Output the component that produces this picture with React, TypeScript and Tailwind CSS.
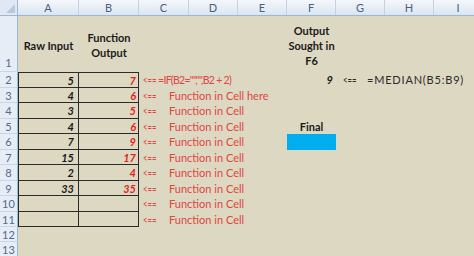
import React from "react";

const colW = ["w-[61px]", "w-[60px]", "w-[50px]", "w-[49px]", "w-[49px]", "w-[49px]", "w-[49px]", "w-[49px]", "w-[49px]"];
const letters = ["A", "B", "C", "D", "E", "F", "G", "H", "I"];

type Row = {
  n: number;
  h: string;
  a?: string;
  b?: string;
  table?: boolean;
  c?: React.ReactNode;
  f?: React.ReactNode;
  g?: React.ReactNode;
};

const Arrow = ({ w }: { w: string }) => (
  <span className={`inline-block ${w}`}>
    <span className="inline-block origin-left scale-x-[0.7] text-[11px]">&lt;==</span>
  </span>
);

const fnCell = (label: string) => (
  <span className="text-[#e0463f]">
    <Arrow w="w-[26px]" />
    {label}
  </span>
);

const rows: Row[] = [
  {
    n: 2,
    h: "h-[16px]",
    a: "5",
    b: "7",
    table: true,
    c: (
      <span className="text-[#e0463f]">
        <Arrow w="w-[15px]" />
        <span className="text-[10.5px] tracking-[-0.7px]">{'=IF(B2="","",B2 + 2)'}</span>
      </span>
    ),
    f: <span className="block w-full pr-[3px] text-right font-bold italic text-[#1a1a1a]">9</span>,
    g: (
      <span className="text-[#2a2a2a]">
        <Arrow w="w-[24px]" />
        <span className="tracking-[0.8px]">=MEDIAN(B5:B9)</span>
      </span>
    ),
  },
  { n: 3, h: "h-[15px]", a: "4", b: "6", table: true, c: fnCell("Function in Cell here") },
  { n: 4, h: "h-[16px]", a: "3", b: "5", table: true, c: fnCell("Function in Cell") },
  {
    n: 5,
    h: "h-[15px]",
    a: "4",
    b: "6",
    table: true,
    c: fnCell("Function in Cell"),
    f: <span className="block w-full text-center font-bold text-[#1a1a1a]">Final</span>,
  },
  {
    n: 6,
    h: "h-[16px]",
    a: "7",
    b: "9",
    table: true,
    c: fnCell("Function in Cell"),
    f: <span className="block h-full w-full bg-[#00aeef]" />,
  },
  { n: 7, h: "h-[15px]", a: "15", b: "17", table: true, c: fnCell("Function in Cell") },
  { n: 8, h: "h-[16px]", a: "2", b: "4", table: true, c: fnCell("Function in Cell") },
  { n: 9, h: "h-[15px]", a: "33", b: "35", table: true, c: fnCell("Function in Cell") },
  { n: 10, h: "h-[16px]", table: true, c: fnCell("Function in Cell") },
  { n: 11, h: "h-[15px]", table: true, c: fnCell("Function in Cell") },
  { n: 12, h: "h-[15px]" },
  { n: 13, h: "h-[16px]" },
];

function RowNum({ n, h, bottom }: { n: number; h: string; bottom?: boolean }) {
  return (
    <div
      className={`${h} flex w-[18px] shrink-0 justify-center border-r border-b border-r-[#9eb6ce] border-b-[#c9d6e6] bg-[#e6edf7] text-[11px] leading-none text-[#55698a] ${
        bottom ? "items-end pb-[3px]" : "items-center"
      }`}
    >
      {n}
    </div>
  );
}

export default function App() {
  return (
    <div
      className="h-[256px] w-[474px] overflow-hidden bg-[#ddd8c2] text-[11px] leading-[15px]"
      style={{ fontFamily: "Lato, 'Open Sans', sans-serif" }}
    >
      {/* column letters */}
      <div className="flex h-[16px] border-b border-[#9eb6ce] bg-gradient-to-b from-[#f4f7fb] to-[#dbe5f1]">
        <div className="relative w-[18px] shrink-0 border-r border-[#9eb6ce] bg-[#dfe8f3]">
          <div className="absolute right-[2px] bottom-[2px] h-0 w-0 border-b-[9px] border-l-[9px] border-b-[#b7c8dc] border-l-transparent" />
        </div>
        {letters.map((l, i) => (
          <div
            key={l}
            className={`${colW[i]} flex shrink-0 items-center justify-center border-r border-[#c3d1e2] text-[11px] text-[#4d5f7a]`}
          >
            {l}
          </div>
        ))}
      </div>

      {/* row 1: headings */}
      <div className="flex h-[56px]">
        <RowNum n={1} h="h-[56px]" bottom />
        <div className="flex w-[61px] shrink-0 items-center justify-center pt-[2px] font-bold text-[#1a1a1a]">
          Raw Input
        </div>
        <div className="flex w-[60px] shrink-0 items-center justify-center pt-[2px] text-center font-bold text-[#1a1a1a]">
          Function
          <br />
          Output
        </div>
        <div className="w-[50px] shrink-0" />
        <div className="w-[49px] shrink-0" />
        <div className="w-[49px] shrink-0" />
        <div className="relative flex w-[49px] shrink-0 items-center justify-center pt-[2px]">
          <div className="whitespace-nowrap text-center font-bold text-[#1a1a1a]">
            Output
            <br />
            Sought in
            <br />
            F6
          </div>
        </div>
      </div>

      {/* rows 2-13 */}
      {rows.map((r) => (
        <div key={r.n} className={`flex ${r.h}`}>
          <RowNum n={r.n} h={r.h} />
          <div
            className={`w-[61px] shrink-0 pr-[4px] text-right font-bold italic text-[#1a1a1a] ${
              r.table ? "border-b border-l border-r border-[#2b2b2b]" : ""
            } ${r.n === 2 ? "border-t" : ""} box-border`}
          >
            {r.a}
          </div>
          <div
            className={`w-[60px] shrink-0 pr-[2px] text-right font-bold italic text-[#e3241b] ${
              r.table ? "border-b border-r border-[#2b2b2b]" : ""
            } ${r.n === 2 ? "border-t" : ""} box-border`}
          >
            {r.b}
          </div>
          <div className="relative w-[50px] shrink-0 whitespace-nowrap pl-[4px]">
            <div className="absolute left-[4px] top-0">{r.c}</div>
          </div>
          <div className="w-[49px] shrink-0" />
          <div className="w-[49px] shrink-0" />
          <div className="w-[49px] shrink-0">{r.f}</div>
          <div className="relative w-[49px] shrink-0 whitespace-nowrap">
            <div className="absolute left-[7px] top-0">{r.g}</div>
          </div>
        </div>
      ))}
    </div>
  );
}
